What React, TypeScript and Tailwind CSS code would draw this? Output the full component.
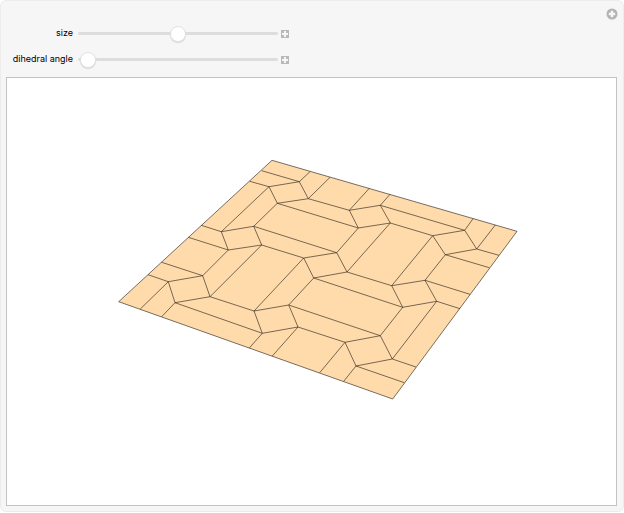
import { useState } from "react";

type Segment = [number, number, number, number];

const outline = "272,160.3 517,231.3 392.7,399 118.7,301.7";

const squares = [
  "299.3,181.7 269,186.7 277.3,203.3 308.3,198.7",
  "349.3,210.3 380.3,205.3 390.3,223 358.3,228",
  "464.7,230.3 432.7,235.7 445.3,254.7 476.7,249",
  "221.3,231.7 253.7,226.3 261.7,245 228.3,250",
  "303.7,258 336.7,252.7 347,272 313.7,278",
  "391.7,285.7 425,280.3 436.7,301.3 402.7,307.3",
  "168.3,281.7 202.7,275.7 210,296.7 175,302.7",
  "254,311 288.7,305 298,327 262.3,333.3",
  "345,342.3 380.3,335.7 392.3,359 356,366",
];

const creases: Segment[] = [
  [261.7, 170.7, 299.3, 181.7],
  [249.7, 181.3, 269, 186.7],
  [310, 171.7, 299.3, 181.7],
  [330, 177.3, 308.3, 198.7],
  [308.3, 198.7, 349.3, 210.3],
  [277.3, 203.3, 358.3, 228],
  [369.3, 188.3, 349.3, 210.3],
  [390, 194.3, 380.3, 205.3],
  [380.3, 205.3, 464.7, 230.3],
  [390.3, 223, 432.7, 235.7],
  [473, 218.7, 464.7, 230.3],
  [495.3, 225, 476.7, 249],
  [476.7, 249, 499, 255.3],
  [445.3, 254.7, 489.3, 267.7],
  [269, 186.7, 221.3, 231.7],
  [277.3, 203.3, 253.7, 226.3],
  [201.3, 225.3, 221.3, 231.7],
  [188.3, 237.3, 228.3, 250],
  [253.7, 226.3, 336.7, 252.7],
  [261.7, 245, 303.7, 258],
  [228.3, 250, 202.7, 275.7],
  [261.7, 245, 210, 296.7],
  [358.3, 228, 336.7, 252.7],
  [390.3, 223, 347, 272],
  [432.7, 235.7, 391.7, 285.7],
  [445.3, 254.7, 425, 280.3],
  [347, 272, 391.7, 285.7],
  [313.7, 278, 402.7, 307.3],
  [425, 280.3, 470, 294.3],
  [436.7, 301.3, 460, 308.7],
  [161.7, 262.3, 202.7, 275.7],
  [148, 274.7, 168.3, 281.7],
  [168.3, 281.7, 140.3, 309],
  [175, 302.7, 161.7, 316.7],
  [210, 296.7, 254, 311],
  [175, 302.7, 262.3, 333.3],
  [303.7, 258, 254, 311],
  [313.7, 278, 288.7, 305],
  [288.7, 305, 380.3, 335.7],
  [298, 327, 345, 342.3],
  [262.3, 333.3, 249.3, 348],
  [298, 327, 272.3, 356],
  [345, 342.3, 319.7, 372.7],
  [356, 366, 343.7, 381.3],
  [402.7, 307.3, 380.3, 335.7],
  [436.7, 301.3, 392.3, 359],
  [392.3, 359, 416, 367],
  [356, 366, 404.3, 382.7],
];

function SliderRow({ id, label, initial }: { id: string; label: string; initial: number }) {
  const [value, setValue] = useState(initial);
  return (
    <div className="flex h-[26px] items-center">
      <label htmlFor={id} className="w-[68px] shrink-0 pr-px text-right text-[9px] leading-3 text-black">
        {label}
      </label>
      <input
        id={id}
        type="range"
        min={0}
        max={100}
        value={value}
        onChange={(e) => setValue(Number(e.target.value))}
        className="ml-1 h-4 w-[200px] appearance-none bg-transparent [&::-webkit-slider-runnable-track]:h-[3px] [&::-webkit-slider-runnable-track]:rounded-full [&::-webkit-slider-runnable-track]:bg-[#dddddd] [&::-webkit-slider-thumb]:-mt-1.5 [&::-webkit-slider-thumb]:size-4 [&::-webkit-slider-thumb]:appearance-none [&::-webkit-slider-thumb]:rounded-full [&::-webkit-slider-thumb]:border [&::-webkit-slider-thumb]:border-[#e2e2e2] [&::-webkit-slider-thumb]:bg-white [&::-webkit-slider-thumb]:shadow-[0_1px_1px_#0000001f]"
      />
      <button type="button" aria-label={`Show ${label} controls`} className="ml-[3px] pt-0.5">
        <svg className="block size-2" viewBox="0 0 8 8" shapeRendering="crispEdges" aria-hidden="true">
          <rect width="8" height="8" fill="#b9b9b9" />
          <path d="M3 1h2v2h2v2H5v2H3V5H1V3h2z" fill="#f6f6f6" />
        </svg>
      </button>
    </div>
  );
}

export default function App() {
  return (
    <main className="rounded-md border border-[#ececec] bg-[#f6f6f6] pr-1.5 pb-[5px] pl-[5px] font-[Inter,Roboto,sans-serif]">
      <header className="flex h-[76px] items-start justify-between">
        <div className="flex flex-col pt-[19px]">
          <SliderRow id="size" label="size" initial={50} />
          <SliderRow id="dihedral-angle" label="dihedral angle" initial={1} />
        </div>
        <button type="button" aria-label="More options" className="mt-[7px] -mr-1 pr-[3px]">
          <svg className="block size-3" viewBox="0 0 12 12" aria-hidden="true">
            <circle cx="6" cy="6" r="5.5" fill="#b3b3b3" />
            <path d="M4.8 2.8h2.4v2h2v2.4h-2v2H4.8v-2h-2V4.8h2z" fill="#f6f6f6" />
          </svg>
        </button>
      </header>
      <section className="border border-[#c3c3c3] bg-white">
        <svg className="block w-full" viewBox="7 78 609 427" role="img" aria-label="Folded sheet">
          <g fill="#ffdbac" stroke="#1c1810" strokeOpacity="0.75" strokeWidth="0.8" strokeLinejoin="round">
            <polygon points={outline} />
            {squares.map((points) => (
              <polygon key={points} points={points} />
            ))}
            {creases.map(([x1, y1, x2, y2]) => (
              <line key={`${x1}-${y1}-${x2}-${y2}`} x1={x1} y1={y1} x2={x2} y2={y2} />
            ))}
          </g>
        </svg>
      </section>
    </main>
  );
}
